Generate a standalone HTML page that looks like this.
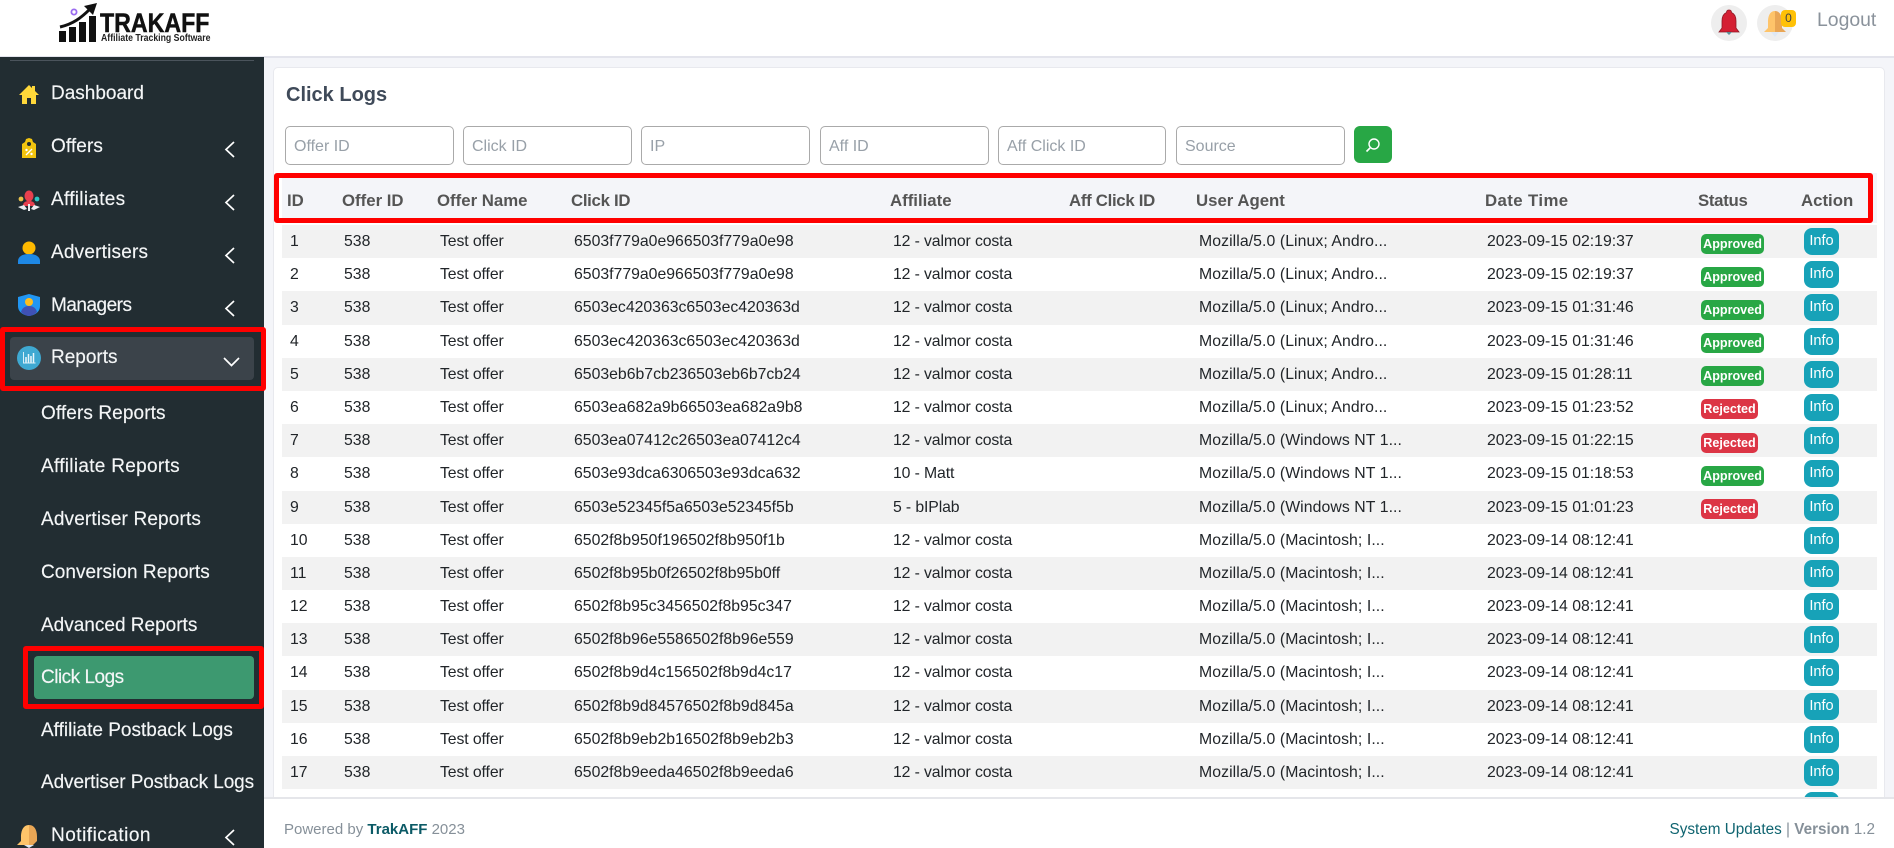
<!DOCTYPE html>
<html lang="en"><head><meta charset="utf-8"><title>Click Logs</title>
<style>
*{box-sizing:border-box}
html,body{margin:0;padding:0;width:1894px;height:848px;overflow:hidden;background:#f4f5f9;font-family:"Liberation Sans",sans-serif;color:#212529}
.abs{position:absolute}
#top{position:absolute;left:0;top:0;width:1894px;height:58px;background:#fff;border-bottom:2px solid #e3e4ec}
#side{position:absolute;left:0;top:57px;width:264px;height:791px;background:#222d32;overflow:hidden}
#side .t{position:absolute;color:#f4f6f7;font-size:19px;line-height:24px;white-space:nowrap;-webkit-text-stroke:.15px #f4f6f7}
#side .m{left:51px}
#side .s{left:41px}
#card{position:absolute;left:273px;top:67px;width:1612px;height:760px;background:#fff;border:1px solid #e8e9ee;border-radius:5px}
#title{position:absolute;left:286px;top:82px;font-size:20px;line-height:26px;font-weight:bold;color:#3f4a59}
input{position:absolute;top:126px;width:169px;height:39px;border:1px solid #aaa;border-radius:5px;padding:2px 8px 0;font:16px "Liberation Sans",sans-serif;background:#fff;outline:none}
input::placeholder{color:#98a0a8;opacity:1}
#go{position:absolute;left:1354px;top:126px;width:38px;height:37px;background:#28a745;border-radius:6px}
#th{position:absolute;left:282px;top:173px;width:1595px;height:50px;background:#f4f5f9}
#th b{position:absolute;top:0;line-height:56px;font-size:16.8px;color:#555;white-space:nowrap}
#rows{position:absolute;left:282px;top:225px;width:1595px;height:572px;overflow:hidden}
.r{position:relative;height:33.2px;line-height:34.8px;font-size:15.8px;white-space:nowrap}
.r:nth-child(odd){background:#f2f2f2}
.r span{position:absolute;top:0}
.r span:nth-child(1){left:8px}
.r span:nth-child(2){left:62px}
.r span:nth-child(3){left:158px;letter-spacing:-.1px}
.r span:nth-child(4){left:292px}
.r span:nth-child(5){left:611px;letter-spacing:-.12px}
.r span:nth-child(6){left:917px;letter-spacing:.08px}
.r span:nth-child(7){left:1205px}
.r em{position:absolute;left:1522px;top:3px;width:35px;height:27px;border-radius:8px;background:#17a2b8;color:#fff;font-style:normal;font-size:14.6px;line-height:27px;text-align:center}
.r u{position:absolute;left:1419px;top:8.5px;height:20px;border-radius:5px;color:#fff;text-decoration:none;font-weight:bold;font-size:12.6px;line-height:20px;text-align:center}
.a{width:63px;background:#28a745}
.x{width:57px;background:#dc3545}
#foot{position:absolute;left:264px;top:797px;width:1630px;height:51px;background:#fff;border-top:2px solid #e5e6ea;font-size:15px;color:#869099}
.box{position:absolute;border:5px solid #f00;border-radius:3px;z-index:9}
</style></head><body>

<div id="top">
<svg class="abs" style="left:56px;top:2px" width="44" height="42" viewBox="56 2 44 42">
<rect x="59" y="31" width="7" height="11" fill="#111"/><rect x="69" y="27" width="7" height="15" fill="#111"/><rect x="79" y="22" width="7" height="20" fill="#111"/><rect x="89" y="16" width="7" height="26" fill="#111"/>
<path d="M60 27C73 24 81 18 90 9" stroke="#111" stroke-width="3" fill="none"/><path d="M84 6L97 3L93 15Z" fill="#111"/>
<circle cx="74" cy="12" r="2.6" fill="none" stroke="#9b6cf0" stroke-width="1.8"/>
</svg>
<div class="abs" style="left:100px;top:9px;font-size:26.5px;font-weight:bold;line-height:28px;color:#111;-webkit-text-stroke:.5px #111;transform:scaleX(.875);transform-origin:0 0">TRAKAFF</div>
<div class="abs" style="left:101px;top:33px;font-size:9.8px;font-weight:bold;line-height:12px;color:#222;white-space:nowrap;transform:scaleX(.89);transform-origin:0 0">Affiliate Tracking Software</div>

<div class="abs" style="left:1711px;top:5px;width:36px;height:36px;border-radius:50%;background:#eeeeee"></div>
<svg class="abs" style="left:1711px;top:5px" width="36" height="36" viewBox="0 0 36 36"><path d="M18 5c1.500 0 2.500 1 2.500 2.500C24 9 25 12 25 16v7l3 4H8l3-4v-7c0-4 1-7 4.500-8.500C15.500 6 16.500 5 18 5z" fill="#d41f33" stroke="#8f1a26" stroke-width=".8"/><path d="M15 27h6l-3 3z" fill="#5b8f96"/></svg>
<div class="abs" style="left:1757px;top:5px;width:36px;height:36px;border-radius:50%;background:#eeeeee"></div>
<svg class="abs" style="left:1757px;top:5px" width="36" height="36" viewBox="0 0 36 36"><path d="M18 6c-5 0-7 5-7 11v6l-4 4h11z" fill="#fec46a"/><path d="M18 6c5 0 7 5 7 11v6l4 4H18z" fill="#e9a655"/><path d="M14 27h8l-4 5z" fill="#dfe8f4"/></svg>
<div class="abs" style="left:1781px;top:10px;width:15px;height:17px;background:#ffc107;border-radius:4px;font-size:12px;line-height:17px;text-align:center;color:#444">0</div>
<div class="abs" style="left:1817px;top:8px;font-size:19.4px;line-height:24px;color:#8a929b">Logout</div>
</div>

<div id="side">
<div class="abs" style="left:10px;top:3px;width:244px;height:1px;background:#4b545c"></div>
<div class="abs" style="left:10px;top:280px;width:244px;height:43px;background:#3b434a;border-radius:4px"></div>
<div class="abs" style="left:34px;top:599px;width:220px;height:43px;background:#3d9970;border-radius:4px"></div>

<svg class="abs" style="left:0;top:0" width="264" height="791" viewBox="0 57 264 791">
<path d="M29 85L19 95h3v9h5v-6h4v6h5v-9h3l-4-4v-5h-3v2z" fill="#ffd83a"/>
<path d="M29 138l3 1 1 3 3 2v14H22v-14l3-2 1-3z" fill="#f2c40f"/><circle cx="29" cy="144" r="2" fill="#222d32"/><path d="M26 155l6-6" stroke="#fff" stroke-width="1.300"/><circle cx="26.500" cy="150" r="1.200" fill="#fff"/><circle cx="31.500" cy="154" r="1.200" fill="#fff"/>
<ellipse cx="29" cy="196" rx="4.500" ry="5.500" fill="#e8404e"/><path d="M23 206c0-4 3-5 6-5s6 1 6 5z" fill="#e8404e"/><circle cx="21" cy="199" r="2.400" fill="#e8c04a"/><circle cx="37" cy="199" r="2.400" fill="#2cc5c5"/><path d="M18 207l6-2 3 4-3 1zM40 207l-6-2-3 4 3 1zM28 204h2v7h-2z" fill="#eceff1"/>
<circle cx="29" cy="248" r="6.500" fill="#ffb900"/><path d="M18 264v-3c0-4 4-7 11-7s11 3 11 7v3z" fill="#1e88e5"/>
<path d="M29 294l11 3v9c0 6-5 9-11 10-6-1-11-4-11-10v-9z" fill="#2196f3"/><circle cx="29" cy="302" r="4" fill="#fdbd1f"/><path d="M21 312c1-4 4-6 8-6s7 2 8 6c-2 2-5 4-8 4s-6-2-8-4z" fill="#3f51b5"/>
<circle cx="29" cy="358" r="12" fill="#3fa9d2"/><path d="M23.500 352v11h12" stroke="#d9f0f8" fill="none" stroke-width="1"/><path d="M26 357v5.500M28.500 354v8.500M31 356v6.500M33.500 353v9.500" stroke="#e8f6fb" stroke-width="1.500"/>
<path d="M29 825c-6 0-8 6-8 12v4l-4 4h12z" fill="#fec46a"/><path d="M29 825c6 0 8 6 8 12v4l-4 4H29z" fill="#e9a655"/><path d="M24 845h10l-5 3z" fill="#dfe8f4"/>
<g fill="none" stroke="#fff" stroke-width="1.700"><path d="M234 142l-8 7.500 8 7.500M234 195l-8 7.500 8 7.500M234 248l-8 7.500 8 7.500M234 301l-8 7.500 8 7.500M234 830l-8 7.500 8 7.500"/><path d="M224 358l7.500 7.500 7.500-7.500"/></g>
</svg>

<div class="t m" style="top:25px">Dashboard</div>
<div class="t m" style="top:78px;letter-spacing:.1px">Offers</div>
<div class="t m" style="top:131px;letter-spacing:.3px">Affiliates</div>
<div class="t m" style="top:184px;letter-spacing:.2px">Advertisers</div>
<div class="t m" style="top:237px;letter-spacing:-.5px">Managers</div>
<div class="t m" style="top:289px">Reports</div>
<div class="t s" style="top:345px;letter-spacing:.1px">Offers Reports</div>
<div class="t s" style="top:398px;letter-spacing:.3px">Affiliate Reports</div>
<div class="t s" style="top:451px;letter-spacing:.15px">Advertiser Reports</div>
<div class="t s" style="top:504px;letter-spacing:.05px">Conversion Reports</div>
<div class="t s" style="top:557px">Advanced Reports</div>
<div class="t s" style="top:609px;letter-spacing:-.5px">Click Logs</div>
<div class="t s" style="top:662px">Affiliate Postback Logs</div>
<div class="t s" style="top:714px;letter-spacing:-.1px">Advertiser Postback Logs</div>
<div class="t m" style="top:767px;letter-spacing:.5px">Notification</div>
</div>

<div id="card"></div>
<div id="title">Click Logs</div>
<input style="left:285px" placeholder="Offer ID">
<input style="left:463px" placeholder="Click ID">
<input style="left:641px" placeholder="IP">
<input style="left:820px" placeholder="Aff ID">
<input style="left:998px;width:168px" placeholder="Aff Click ID">
<input style="left:1176px" placeholder="Source">
<div id="go"><svg width="38" height="37" viewBox="0 0 38 37"><circle cx="20" cy="18" r="5" fill="none" stroke="#fff" stroke-width="1.400"/><path d="M16 22l-3.500 3.500" stroke="#fff" stroke-width="1.600"/></svg></div>

<div id="th">
<b style="left:5px">ID</b><b style="left:60px">Offer ID</b><b style="left:155px">Offer Name</b><b style="left:289px;letter-spacing:-.3px">Click ID</b><b style="left:608px">Affiliate</b><b style="left:787px;letter-spacing:-.3px">Aff Click ID</b><b style="left:914px">User Agent</b><b style="left:1203px;letter-spacing:.4px">Date Time</b><b style="left:1416px;letter-spacing:-.3px">Status</b><b style="left:1519px">Action</b>
</div>

<div id="rows">
<div class="r"><span>1</span><span>538</span><span>Test offer</span><span>6503f779a0e966503f779a0e98</span><span>12 - valmor costa</span><span>Mozilla/5.0 (Linux; Andro...</span><span>2023-09-15 02:19:37</span><u class="a">Approved</u><em>Info</em></div>
<div class="r"><span>2</span><span>538</span><span>Test offer</span><span>6503f779a0e966503f779a0e98</span><span>12 - valmor costa</span><span>Mozilla/5.0 (Linux; Andro...</span><span>2023-09-15 02:19:37</span><u class="a">Approved</u><em>Info</em></div>
<div class="r"><span>3</span><span>538</span><span>Test offer</span><span>6503ec420363c6503ec420363d</span><span>12 - valmor costa</span><span>Mozilla/5.0 (Linux; Andro...</span><span>2023-09-15 01:31:46</span><u class="a">Approved</u><em>Info</em></div>
<div class="r"><span>4</span><span>538</span><span>Test offer</span><span>6503ec420363c6503ec420363d</span><span>12 - valmor costa</span><span>Mozilla/5.0 (Linux; Andro...</span><span>2023-09-15 01:31:46</span><u class="a">Approved</u><em>Info</em></div>
<div class="r"><span>5</span><span>538</span><span>Test offer</span><span>6503eb6b7cb236503eb6b7cb24</span><span>12 - valmor costa</span><span>Mozilla/5.0 (Linux; Andro...</span><span>2023-09-15 01:28:11</span><u class="a">Approved</u><em>Info</em></div>
<div class="r"><span>6</span><span>538</span><span>Test offer</span><span>6503ea682a9b66503ea682a9b8</span><span>12 - valmor costa</span><span>Mozilla/5.0 (Linux; Andro...</span><span>2023-09-15 01:23:52</span><u class="x">Rejected</u><em>Info</em></div>
<div class="r"><span>7</span><span>538</span><span>Test offer</span><span>6503ea07412c26503ea07412c4</span><span>12 - valmor costa</span><span>Mozilla/5.0 (Windows NT 1...</span><span>2023-09-15 01:22:15</span><u class="x">Rejected</u><em>Info</em></div>
<div class="r"><span>8</span><span>538</span><span>Test offer</span><span>6503e93dca6306503e93dca632</span><span>10 - Matt</span><span>Mozilla/5.0 (Windows NT 1...</span><span>2023-09-15 01:18:53</span><u class="a">Approved</u><em>Info</em></div>
<div class="r"><span>9</span><span>538</span><span>Test offer</span><span>6503e52345f5a6503e52345f5b</span><span>5 - bIPlab</span><span>Mozilla/5.0 (Windows NT 1...</span><span>2023-09-15 01:01:23</span><u class="x">Rejected</u><em>Info</em></div>
<div class="r"><span>10</span><span>538</span><span>Test offer</span><span>6502f8b950f196502f8b950f1b</span><span>12 - valmor costa</span><span>Mozilla/5.0 (Macintosh; I...</span><span>2023-09-14 08:12:41</span><em>Info</em></div>
<div class="r"><span>11</span><span>538</span><span>Test offer</span><span>6502f8b95b0f26502f8b95b0ff</span><span>12 - valmor costa</span><span>Mozilla/5.0 (Macintosh; I...</span><span>2023-09-14 08:12:41</span><em>Info</em></div>
<div class="r"><span>12</span><span>538</span><span>Test offer</span><span>6502f8b95c3456502f8b95c347</span><span>12 - valmor costa</span><span>Mozilla/5.0 (Macintosh; I...</span><span>2023-09-14 08:12:41</span><em>Info</em></div>
<div class="r"><span>13</span><span>538</span><span>Test offer</span><span>6502f8b96e5586502f8b96e559</span><span>12 - valmor costa</span><span>Mozilla/5.0 (Macintosh; I...</span><span>2023-09-14 08:12:41</span><em>Info</em></div>
<div class="r"><span>14</span><span>538</span><span>Test offer</span><span>6502f8b9d4c156502f8b9d4c17</span><span>12 - valmor costa</span><span>Mozilla/5.0 (Macintosh; I...</span><span>2023-09-14 08:12:41</span><em>Info</em></div>
<div class="r"><span>15</span><span>538</span><span>Test offer</span><span>6502f8b9d84576502f8b9d845a</span><span>12 - valmor costa</span><span>Mozilla/5.0 (Macintosh; I...</span><span>2023-09-14 08:12:41</span><em>Info</em></div>
<div class="r"><span>16</span><span>538</span><span>Test offer</span><span>6502f8b9eb2b16502f8b9eb2b3</span><span>12 - valmor costa</span><span>Mozilla/5.0 (Macintosh; I...</span><span>2023-09-14 08:12:41</span><em>Info</em></div>
<div class="r"><span>17</span><span>538</span><span>Test offer</span><span>6502f8b9eeda46502f8b9eeda6</span><span>12 - valmor costa</span><span>Mozilla/5.0 (Macintosh; I...</span><span>2023-09-14 08:12:41</span><em>Info</em></div>
<div class="r" style="background:#fff"><em>Info</em></div>
</div>

<div id="foot">
<div class="abs" style="left:20px;top:22px;white-space:nowrap">Powered by <b style="color:#0b5a66">TrakAFF</b> 2023</div>
<div class="abs" style="right:19px;top:22px;white-space:nowrap;font-size:15.3px"><span style="color:#0f6470">System Updates</span> | <b>Version</b> 1.2</div>
</div>

<div class="box" style="left:0;top:327px;width:266px;height:64px"></div>
<div class="box" style="left:23px;top:646px;width:241px;height:63px"></div>
<div class="box" style="left:274px;top:173px;width:1599px;height:50px"></div>
</body></html>
